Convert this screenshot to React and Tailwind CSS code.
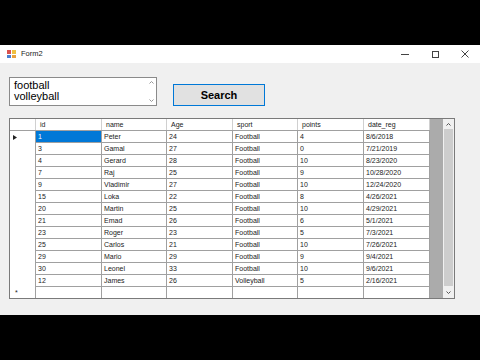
import React from 'react';

const rows = [
  ['1', 'Peter', '24', 'Football', '4', '8/6/2018'],
  ['3', 'Gamal', '27', 'Football', '0', '7/21/2019'],
  ['4', 'Gerard', '28', 'Football', '10', '8/23/2020'],
  ['7', 'Raj', '25', 'Football', '9', '10/28/2020'],
  ['9', 'Vladimir', '27', 'Football', '10', '12/24/2020'],
  ['15', 'Loka', '22', 'Football', '8', '4/26/2021'],
  ['20', 'Martin', '25', 'Football', '10', '4/29/2021'],
  ['21', 'Emad', '26', 'Football', '6', '5/1/2021'],
  ['23', 'Roger', '23', 'Football', '5', '7/3/2021'],
  ['25', 'Carlos', '21', 'Football', '10', '7/26/2021'],
  ['29', 'Mario', '29', 'Football', '9', '9/4/2021'],
  ['30', 'Leonel', '33', 'Football', '10', '9/6/2021'],
  ['12', 'James', '26', 'Volleyball', '5', '2/16/2021'],
];

const headers = ['id', 'name', 'Age', 'sport', 'points', 'date_reg'];
const widths = ['w-[66px]', 'w-[65px]', 'w-[66px]', 'w-[65px]', 'w-[66px]', 'w-[66px]'];

function TitleBar() {
  return (
    <div className="h-[18px] bg-white flex items-center">
      <div className="ml-[7px] w-[9px] h-[8px] grid grid-cols-2 gap-[1px]">
        <div className="bg-[#d9534f]" />
        <div className="bg-[#f0c040]" />
        <div className="bg-[#4a7fd0]" />
        <div className="bg-[#e8a040]" />
      </div>
      <span className="ml-[5px] text-[7.5px] text-[#222]">Form2</span>
      <div className="ml-auto flex items-center h-full">
        <div className="w-[30px] flex justify-center">
          <div className="w-[8px] h-px bg-[#444] mt-[1px]" />
        </div>
        <div className="w-[30px] flex justify-center">
          <div className="w-[7px] h-[7px] border border-[#444]" />
        </div>
        <div className="w-[30px] flex justify-center">
          <svg width="8" height="8" viewBox="0 0 8 8">
            <path d="M0.5 0.5 L7.5 7.5 M7.5 0.5 L0.5 7.5" stroke="#444" strokeWidth="1" />
          </svg>
        </div>
      </div>
    </div>
  );
}

function Chevron({ up }) {
  return (
    <svg width="5" height="3" viewBox="0 0 5 3">
      <path d={up ? 'M0.5 2.5 L2.5 0.5 L4.5 2.5' : 'M0.5 0.5 L2.5 2.5 L4.5 0.5'} stroke="#555" fill="none" strokeWidth="1" />
    </svg>
  );
}

function Grid() {
  return (
    <div className="mt-[12px] ml-[9px] w-[446px] h-[181px] border border-[#7a7a7a] bg-[#ababab] flex justify-between">
      <div className="w-[420px] h-full bg-white flex flex-col">
        <div className="flex h-[12px] border-b border-[#a0a0a0]">
          <div className="w-[26px] border-r border-[#d0d0d0]" />
          {headers.map((h, i) => (
            <div key={h} className={`${widths[i]} border-r border-[#d0d0d0] pl-[4px] text-[7px] leading-[11px] text-[#222]`}>
              {h}
            </div>
          ))}
        </div>
        {rows.map((r, ri) => (
          <div key={ri} className="flex h-[12px]">
            <div className="w-[26px] border-r border-[#a0a0a0] flex items-center pl-[3px]">
              {ri === 0 && (
                <svg width="4" height="5" viewBox="0 0 4 5">
                  <path d="M0 0 L4 2.5 L0 5 Z" fill="#222" />
                </svg>
              )}
            </div>
            {r.map((c, ci) => (
              <div
                key={ci}
                className={`${widths[ci]} border-r border-b border-[#a0a0a0] pl-[2px] text-[7px] leading-[11px] ${
                  ri === 0 && ci === 0 ? 'bg-[#0078d7] text-white' : 'text-[#222]'
                }`}
              >
                {c}
              </div>
            ))}
          </div>
        ))}
        <div className="flex h-[11px]">
          <div className="w-[26px] border-r border-[#a0a0a0] pl-[5px] text-[7px] leading-[11px] text-[#222]">*</div>
          {widths.map((w, i) => (
            <div key={i} className={`${w} border-r border-[#a0a0a0]`} />
          ))}
        </div>
      </div>
      <div className="w-[11px] h-full bg-[#f0f0f0] flex flex-col">
        <div className="h-[10px] flex items-center justify-center">
          <Chevron up />
        </div>
        <div className="flex-1 mx-[1px] bg-[#cdcdcd]" />
        <div className="h-[12px] flex items-center justify-center">
          <Chevron />
        </div>
      </div>
    </div>
  );
}

export default function App() {
  return (
    <div className="w-[480px] h-[360px] bg-black flex flex-col" style={{ fontFamily: '"Liberation Sans", Arial, sans-serif' }}>
      <div className="h-[45px]" />
      <div className="h-[270px] bg-[#f0f0f0] flex flex-col">
        <TitleBar />
        <div className="flex-1 flex flex-col">
          <div className="flex items-start mt-[14px]">
            <div className="ml-[9px] w-[148px] h-[29px] bg-white border border-[#8a8a8a] flex">
              <div className="flex-1 pl-[4px] pt-[2px] text-[11px] leading-[11px] text-black">
                <div>football</div>
                <div>volleyball</div>
              </div>
              <div className="w-[10px] flex flex-col justify-between items-center py-[3px] opacity-60">
                <Chevron up />
                <Chevron />
              </div>
            </div>
            <button className="ml-[16px] mt-[7px] w-[92px] h-[22px] bg-[#e1e1e1] border-[1.5px] border-[#0078d7] text-[11px] font-bold text-black flex items-center justify-center">
              Search
            </button>
          </div>
          <Grid />
        </div>
      </div>
    </div>
  );
}
